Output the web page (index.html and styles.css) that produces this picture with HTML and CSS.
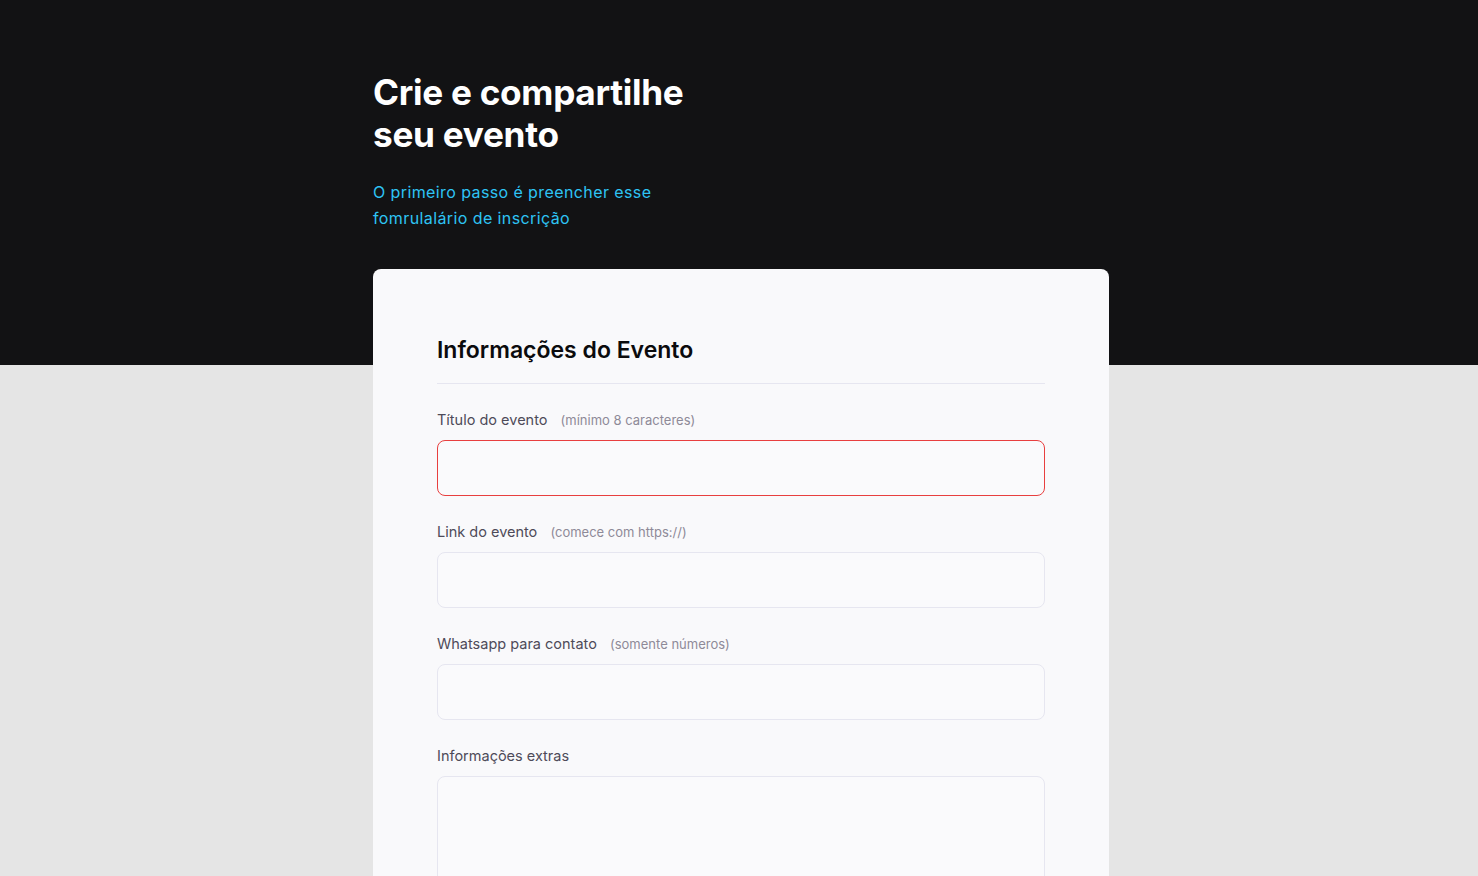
FILE: index.html
```html
<!DOCTYPE html>
<html lang="pt-BR">
<head>
  <meta charset="UTF-8">
  <meta name="viewport" content="width=device-width, initial-scale=1.0">
  <title>Crie seu evento</title>
  <link rel="stylesheet" href="styles.css">
</head>
<body>
  <header class="page-header">
    <div class="wrapper">
      <h1>Crie e compartilhe<br>seu evento</h1>
      <p>O primeiro passo é preencher esse fomrulalário de inscrição</p>
    </div>
  </header>

  <main class="wrapper">
    <form class="event-form">
      <fieldset>
        <legend>Informações do Evento</legend>

        <div class="field">
          <label for="title">Título do evento <span>(mínimo 8 caracteres)</span></label>
          <input type="text" id="title" class="invalid">
        </div>

        <div class="field">
          <label for="link">Link do evento <span>(comece com https://)</span></label>
          <input type="text" id="link">
        </div>

        <div class="field">
          <label for="whatsapp">Whatsapp para contato <span>(somente números)</span></label>
          <input type="text" id="whatsapp">
        </div>

        <div class="field">
          <label for="extras">Informações extras</label>
          <textarea id="extras"></textarea>
        </div>
      </fieldset>
    </form>
  </main>
</body>
</html>
```

FILE: styles.css
```css
* {
  box-sizing: border-box;
}
body {
  margin: 0;
  padding: 0 0 0 4px;
  background-color: #e5e5e5;
  font-family: Inter, "Noto Sans", sans-serif;
  color: #4e4b59;
}
.wrapper {
  width: 736px;
  margin: 0 auto;
}
.page-header {
  background-color: #121214;
  height: 365px;
  margin-left: -4px;
  padding: 71px 0 0 4px;
}
.page-header h1 {
  margin: 0;
  color: #fff;
  font-size: 35.2px;
  line-height: 42px;
  font-weight: 700;
  letter-spacing: -0.3px;
}
.page-header p {
  margin: 24px 0 0;
  width: 310px;
  color: #2ec4f4;
  font-size: 16px;
  line-height: 26px;
  letter-spacing: 0.4px;
}
main.wrapper {
  margin-top: -96px;
}
.event-form {
  background-color: #f9f9fb;
  border-radius: 8px;
  padding: 66px 64px 40px;
  height: 640px;
}
fieldset {
  border: none;
  margin: 0;
  padding: 0;
}
legend {
  width: 100%;
  padding: 0 0 18px;
  margin-bottom: 26px;
  border-bottom: 1px solid #e6e6f0;
  color: #0b0b0d;
  font-size: 23px;
  line-height: 30px;
  font-weight: 600;
}
.field {
  margin-bottom: 26px;
}
.field label {
  display: block;
  font-size: 14.5px;
  line-height: 20px;
  margin-bottom: 10px;
}
.field label span {
  margin-left: 9px;
  font-size: 13px;
  color: #8e8a98;
}
.field input,
.field textarea {
  display: block;
  width: 100%;
  height: 56px;
  background-color: #fafafc;
  border: 1px solid #e6e6f0;
  border-radius: 8px;
  outline: none;
  font: inherit;
}
.field textarea {
  height: 160px;
  resize: none;
}
.field input.invalid {
  border-color: #e83f3f;
}
```
